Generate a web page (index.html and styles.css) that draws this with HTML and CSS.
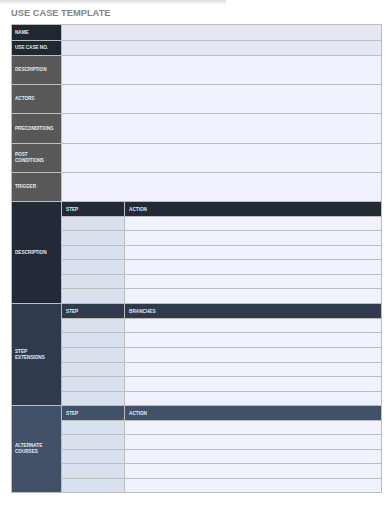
FILE: index.html
```html
<!DOCTYPE html>
<html>
<head>
<meta charset="utf-8">
<link rel="stylesheet" href="styles.css">
</head>
<body>
<div class="page">
  <div class="topshade"></div>
  <h1 class="title">USE CASE TEMPLATE</h1>
  <div class="sheet">
    <div class="lbl dark">NAME</div><div class="val name"></div>
    <div class="lbl dark">USE CASE NO.</div><div class="val name"></div>
    <div class="lbl grey">DESCRIPTION</div><div class="val"></div>
    <div class="lbl grey">ACTORS</div><div class="val"></div>
    <div class="lbl grey">PRECONDITIONS</div><div class="val"></div>
    <div class="lbl grey">POST<br>CONDITIONS</div><div class="val"></div>
    <div class="lbl grey">TRIGGER</div><div class="val"></div>

    <div class="lbl sec s1 span7">DESCRIPTION</div>
    <div class="hd s1">STEP</div><div class="hd s1">ACTION</div>
    <div class="step"></div><div class="cell"></div>
    <div class="step"></div><div class="cell"></div>
    <div class="step"></div><div class="cell"></div>
    <div class="step"></div><div class="cell"></div>
    <div class="step"></div><div class="cell"></div>
    <div class="step"></div><div class="cell"></div>

    <div class="lbl sec s2 span7">STEP<br>EXTENSIONS</div>
    <div class="hd s2">STEP</div><div class="hd s2">BRANCHES</div>
    <div class="step"></div><div class="cell"></div>
    <div class="step"></div><div class="cell"></div>
    <div class="step"></div><div class="cell"></div>
    <div class="step"></div><div class="cell"></div>
    <div class="step"></div><div class="cell"></div>
    <div class="step"></div><div class="cell"></div>

    <div class="lbl sec s3 span6">ALTERNATE<br>COURSES</div>
    <div class="hd s3">STEP</div><div class="hd s3">ACTION</div>
    <div class="step"></div><div class="cell"></div>
    <div class="step"></div><div class="cell"></div>
    <div class="step"></div><div class="cell"></div>
    <div class="step"></div><div class="cell"></div>
    <div class="step"></div><div class="cell"></div>
  </div>
</div>
</body>
</html>
```

FILE: styles.css
```css
html, body {
  margin: 0;
  padding: 0;
  background: #ffffff;
}

.page {
  position: relative;
  width: 390px;
  height: 505px;
  padding-left: 11px;
  box-sizing: border-box;
  font-family: "Liberation Sans", Arial, sans-serif;
}

.topshade {
  position: absolute;
  left: 0;
  top: 0;
  width: 226px;
  height: 5px;
  background: linear-gradient(to bottom, #dcdcdc, rgba(255,255,255,0));
}

.title {
  margin: 0;
  height: 24px;
  box-sizing: border-box;
  padding-top: 8px;
  font-size: 9.3px;
  line-height: 10px;
  font-weight: bold;
  color: #858585;
  letter-spacing: 0;
}

.sheet {
  width: 369px;
  display: grid;
  grid-template-columns: 49px 62px 1fr;
  grid-template-rows:
    15px 14px 28px 28px 29px 28px 28px
    14px 13px 14px 13px 14px 13px 14px
    14px 13px 14px 14px 13px 14px 13px
    14px 13px 14px 13px 14px 13px;
  gap: 1px;
  padding: 1px;
  background: #bdbdbd;
}

.lbl {
  grid-column: 1;
  display: flex;
  align-items: center;
  padding-left: 3px;
  font-size: 4.7px;
  line-height: 6px;
  font-weight: bold;
  color: #e2eaf4;
  letter-spacing: -0.05px;
}

.val {
  grid-column: 2 / 4;
  background: #eff2fd;
}

.val.name {
  background: #e5e8f4;
}

.dark { background: #1f2733; }
.grey { background: #585858; }
.s1 { background: #212a36; }
.s2 { background: #2f3a4d; }
.s3 { background: #415268; }

.span7 { grid-row: span 7; }
.span6 { grid-row: span 6; }

.hd {
  display: flex;
  align-items: center;
  padding-left: 4px;
  font-size: 4.7px;
  font-weight: bold;
  color: #e2eaf4;
}

.step {
  background: #d9e0ee;
}

.cell {
  background: #eff2fd;
}
```
